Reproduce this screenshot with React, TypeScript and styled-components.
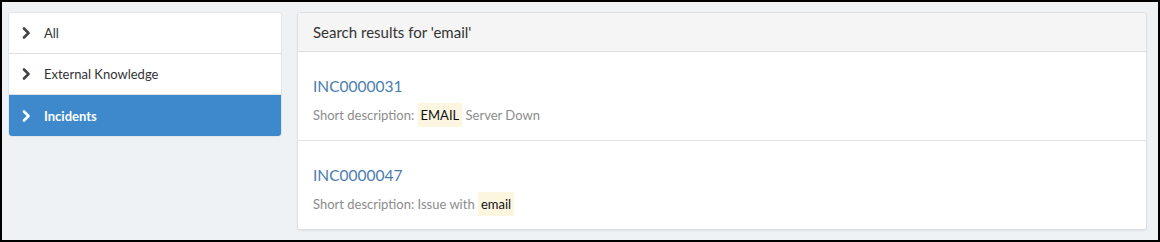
import React from "react";
import styled, { createGlobalStyle } from "styled-components";

const Global = createGlobalStyle`
  html, body { margin: 0; padding: 0; }
  body { font-family: Lato, "Open Sans", sans-serif; }
  * { box-sizing: border-box; }
`;

const Frame = styled.div`
  width: 1160px;
  height: 242px;
  border: 2px solid #000;
  background: #eff2f5;
  display: flex;
  align-items: flex-start;
  gap: 15px;
  padding: 10px 11px 0 6px;
`;

const Nav = styled.div`
  width: 274px;
  flex: none;
  background: #fff;
  border: 1px solid #e1e4e8;
  border-radius: 4px;
  overflow: hidden;
`;

const NavItem = styled.div<{ $active?: boolean }>`
  height: 41px;
  display: flex;
  align-items: center;
  gap: 13px;
  padding-left: 13px;
  font-size: 13px;
  font-weight: ${(p) => (p.$active ? 700 : 400)};
  color: ${(p) => (p.$active ? "#fff" : "#333")};
  background: ${(p) => (p.$active ? "#3d89cc" : "#fff")};
  border-bottom: ${(p) => (p.$active ? "none" : "1px solid #e0e0e0")};
`;

const Chevron = styled.svg`
  width: 9px;
  height: 12px;
  flex: none;
`;

const Results = styled.div`
  flex: 1;
  background: #fff;
  border: 1px solid #dcdfe3;
  border-radius: 3px;
  box-shadow: 0 1px 2px rgba(0, 0, 0, 0.06);
  overflow: hidden;
`;

const Header = styled.div`
  height: 39px;
  display: flex;
  align-items: center;
  padding-left: 15px;
  background: #f5f5f5;
  border-bottom: 1px solid #dddddd;
  font-size: 15px;
  color: #333;
`;

const Item = styled.div<{ $last?: boolean }>`
  padding: 23px 15px 13px;
  border-bottom: ${(p) => (p.$last ? "none" : "1px solid #e3e3e3")};
`;

const Title = styled.a`
  display: block;
  font-size: 15.5px;
  line-height: 22px;
  color: #4a7dae;
  text-decoration: none;
`;

const Desc = styled.div`
  margin-top: 6px;
  font-size: 13px;
  line-height: 24px;
  color: #8c8c8c;
`;

const Mark = styled.span`
  display: inline-block;
  padding: 0 3px;
  background: #fcf6e1;
  color: #111;
`;

const ChevronIcon = ({ color }: { color: string }) => (
  <Chevron viewBox="0 0 9 12">
    <polyline
      points="2,1.5 6.5,6 2,10.5"
      fill="none"
      stroke={color}
      strokeWidth="2.6"
      strokeLinecap="round"
      strokeLinejoin="round"
    />
  </Chevron>
);

const navItems = [
  { label: "All" },
  { label: "External Knowledge" },
  { label: "Incidents", active: true },
];

export default function App() {
  return (
    <>
      <Global />
      <Frame>
        <Nav>
          {navItems.map((n) => (
            <NavItem key={n.label} $active={n.active}>
              <ChevronIcon color={n.active ? "#fff" : "#444"} />
              {n.label}
            </NavItem>
          ))}
        </Nav>
        <Results>
          <Header>Search results for 'email'</Header>
          <Item>
            <Title href="#">INC0000031</Title>
            <Desc>
              Short description: <Mark>EMAIL</Mark> Server Down
            </Desc>
          </Item>
          <Item $last>
            <Title href="#">INC0000047</Title>
            <Desc>
              Short description: Issue with <Mark>email</Mark>
            </Desc>
          </Item>
        </Results>
      </Frame>
    </>
  );
}
